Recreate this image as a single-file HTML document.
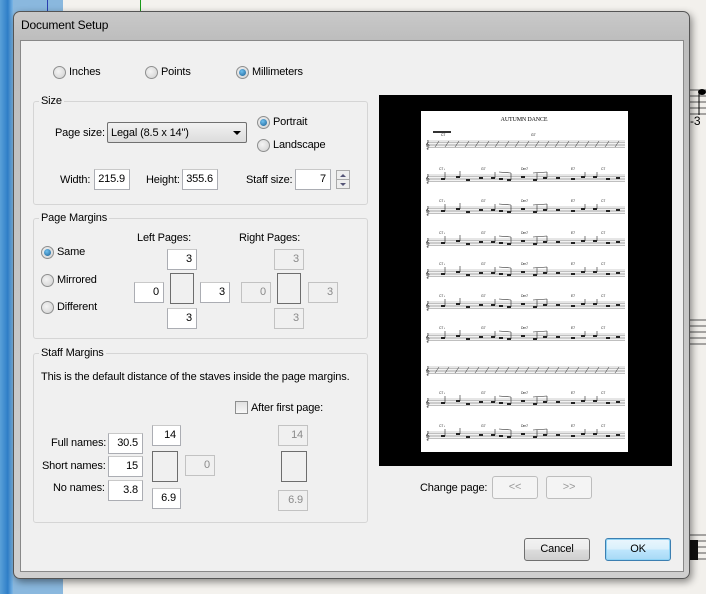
<!DOCTYPE html>
<html><head><meta charset="utf-8"><style>
*{margin:0;padding:0;box-sizing:border-box}
body{width:706px;height:594px;overflow:hidden;position:relative;background:#f4f2ee;font-family:"Liberation Sans",sans-serif;font-size:11px;letter-spacing:-0.15px;color:#000}
.abs{position:absolute}
.t{position:absolute;white-space:nowrap;line-height:14px}
.frame{left:13px;top:11px;width:677px;height:568px;border-radius:7px;background:linear-gradient(180deg,#c9c9c9 0%,#bdbdbd 5%,#cfcfcf 100%);border:1px solid #555;box-shadow:2px 3px 8px rgba(0,0,0,.45)}
.client{left:20px;top:40px;width:664px;height:532px;background:#f0f0f0;border:1px solid #888}
.grp{position:absolute;border:1px solid #d5d5d5;border-radius:3px}
.grp span{position:absolute;top:-8px;left:5px;background:#f0f0f0;padding:0 2px;line-height:14px}
.rad{position:absolute;width:13px;height:13px;border-radius:50%;border:1px solid #8e8f8f;background:radial-gradient(circle at 40% 40%,#f4f4f4,#cfcfcf)}
.rad.on::after{content:"";position:absolute;left:2px;top:2px;width:7px;height:7px;border-radius:50%;background:radial-gradient(circle at 40% 35%,#6fc1f0,#1b5f93)}
.tb{position:absolute;height:21px;background:#fff;border:1px solid #abadb3;border-top-color:#c9c9c9;text-align:right;padding-right:4px;line-height:19px}
.tb.d{background:#f0f0f0;color:#8a8a8a;border-color:#c2c2c2}
.box{position:absolute;border:1px solid #6d6d6d}
.btn{position:absolute;height:23px;border:1px solid #707070;border-radius:3px;background:linear-gradient(#f2f2f2 0%,#ebebeb 50%,#dddddd 51%,#cfcfcf 100%);text-align:center;line-height:21px}
</style></head><body>
<div class="abs" style="left:0;top:0;width:13px;height:594px;background:linear-gradient(90deg,#5aa0d8,#2f7fc8 60%,#7cb6e6)"></div>
<div class="abs" style="left:13px;top:0;width:50px;height:594px;background:#8ab8de"></div>
<div class="abs" style="left:47px;top:0;width:1px;height:12px;background:#2a3fb0"></div>
<div class="abs" style="left:140px;top:0;width:1px;height:12px;background:#1a9a1a"></div>
<div class="abs" style="left:690px;top:0;width:16px;height:594px;background:#f2f0ec"></div>
<svg class="abs" style="left:690px;top:0" width="16" height="594">
<g stroke="#555" stroke-width="1"><line x1="0" y1="90" x2="16" y2="90"/><line x1="0" y1="96" x2="16" y2="96"/><line x1="0" y1="102" x2="16" y2="102"/><line x1="0" y1="108" x2="16" y2="108"/><line x1="0" y1="114" x2="16" y2="114"/>
<line x1="0" y1="320" x2="16" y2="320"/><line x1="0" y1="326" x2="16" y2="326"/><line x1="0" y1="332" x2="16" y2="332"/><line x1="0" y1="338" x2="16" y2="338"/><line x1="0" y1="344" x2="16" y2="344"/>
<line x1="0" y1="535" x2="16" y2="535"/><line x1="0" y1="541" x2="16" y2="541"/><line x1="0" y1="547" x2="16" y2="547"/><line x1="0" y1="553" x2="16" y2="553"/><line x1="0" y1="559" x2="16" y2="559"/></g>
<ellipse cx="12" cy="92" rx="4" ry="3" fill="#000"/><line x1="9" y1="92" x2="9" y2="115" stroke="#000"/><text x="0" y="125" font-size="12" font-family="Liberation Sans">-3</text>
<rect x="0" y="540" width="8" height="20" fill="#111"/>
</svg>
<div class="abs frame"></div>
<div class="t" style="left:21px;top:18px;font-size:12px">Document Setup</div>
<div class="abs client"></div>

<div class="rad" style="left:53px;top:66px"></div><div class="t" style="left:69px;top:65px">Inches</div>
<div class="rad" style="left:145px;top:66px"></div><div class="t" style="left:161px;top:65px">Points</div>
<div class="rad on" style="left:236px;top:66px"></div><div class="t" style="left:252px;top:65px">Millimeters</div>

<div class="grp" style="left:33px;top:101px;width:335px;height:104px"><span>Size</span></div>
<div class="t" style="left:55px;top:126px">Page size:</div>
<div class="abs" style="left:107px;top:122px;width:140px;height:21px;border:1px solid #707070;border-radius:2px;background:linear-gradient(#f2f2f2,#dcdcdc)"></div>
<div class="t" style="left:111px;top:126px">Legal (8.5 x 14")</div>
<div class="abs" style="left:233px;top:131px;width:0;height:0;border-left:4px solid transparent;border-right:4px solid transparent;border-top:4px solid #000"></div>
<div class="rad on" style="left:257px;top:116px"></div><div class="t" style="left:273px;top:115px">Portrait</div>
<div class="rad" style="left:257px;top:139px"></div><div class="t" style="left:273px;top:138px">Landscape</div>
<div class="t" style="left:60px;top:173px">Width:</div>
<div class="tb" style="left:94px;top:169px;width:36px">215.9</div>
<div class="t" style="left:146px;top:173px">Height:</div>
<div class="tb" style="left:182px;top:169px;width:36px">355.6</div>
<div class="t" style="left:246px;top:173px">Staff size:</div>
<div class="tb" style="left:295px;top:169px;width:36px">7</div>
<div class="abs" style="left:336px;top:170px;width:14px;height:19px;border:1px solid #aaa;background:#eee"></div>
<div class="abs" style="left:337px;top:179px;width:12px;height:1px;background:#aaa"></div>
<div class="abs" style="left:340px;top:174px;border-left:3px solid transparent;border-right:3px solid transparent;border-bottom:3px solid #557"></div>
<div class="abs" style="left:340px;top:183px;border-left:3px solid transparent;border-right:3px solid transparent;border-top:3px solid #557"></div>

<div class="grp" style="left:33px;top:218px;width:335px;height:121px"><span>Page Margins</span></div>
<div class="rad on" style="left:41px;top:246px"></div><div class="t" style="left:57px;top:245px">Same</div>
<div class="rad" style="left:41px;top:274px"></div><div class="t" style="left:57px;top:273px">Mirrored</div>
<div class="rad" style="left:41px;top:301px"></div><div class="t" style="left:57px;top:300px">Different</div>
<div class="t" style="left:137px;top:231px">Left Pages:</div>
<div class="t" style="left:239px;top:231px">Right Pages:</div>
<div class="tb" style="left:167px;top:249px;width:30px">3</div>
<div class="tb" style="left:134px;top:282px;width:30px">0</div>
<div class="box" style="left:170px;top:273px;width:24px;height:31px"></div>
<div class="tb" style="left:200px;top:282px;width:30px">3</div>
<div class="tb" style="left:167px;top:308px;width:30px">3</div>
<div class="tb d" style="left:274px;top:249px;width:30px">3</div>
<div class="tb d" style="left:241px;top:282px;width:30px">0</div>
<div class="box" style="left:277px;top:273px;width:24px;height:31px"></div>
<div class="tb d" style="left:308px;top:282px;width:30px">3</div>
<div class="tb d" style="left:274px;top:308px;width:30px">3</div>

<div class="grp" style="left:33px;top:353px;width:335px;height:170px"><span>Staff Margins</span></div>
<div class="t" style="left:41px;top:370px">This is the default distance of the staves inside the page margins.</div>
<div class="abs" style="left:235px;top:401px;width:13px;height:13px;border:1px solid #8e8f8f;background:linear-gradient(#e0e0e0,#f8f8f8)"></div>
<div class="t" style="left:251px;top:401px">After first page:</div>
<div class="t" style="left:51px;top:436px">Full names:</div>
<div class="t" style="left:42px;top:459px">Short names:</div>
<div class="t" style="left:53px;top:481px">No names:</div>
<div class="tb" style="left:108px;top:433px;width:35px">30.5</div>
<div class="tb" style="left:108px;top:456px;width:35px">15</div>
<div class="tb" style="left:108px;top:480px;width:35px">3.8</div>
<div class="tb" style="left:152px;top:425px;width:29px">14</div>
<div class="box" style="left:152px;top:451px;width:26px;height:31px"></div>
<div class="tb d" style="left:185px;top:455px;width:30px">0</div>
<div class="tb" style="left:152px;top:488px;width:29px">6.9</div>
<div class="tb d" style="left:278px;top:425px;width:30px">14</div>
<div class="box" style="left:281px;top:451px;width:26px;height:31px"></div>
<div class="tb d" style="left:278px;top:490px;width:30px">6.9</div>

<div class="abs" style="left:379px;top:95px;width:293px;height:371px;background:#000"></div>
<svg class="abs" style="left:421px;top:111px" width="207" height="341" viewBox="0 0 207 341">
<rect width="207" height="341" fill="#fff"/>
<text x="103" y="10" font-size="6" text-anchor="middle" font-family="Liberation Serif">AUTUMN DANCE</text>
<rect x="12" y="20" width="18" height="2" fill="#333"/>
<defs>
<g id="st"><g stroke="#999" stroke-width=".6"><line x1="6" y1="0" x2="204" y2="0"/><line x1="6" y1="1.6" x2="204" y2="1.6"/><line x1="6" y1="3.2" x2="204" y2="3.2"/><line x1="6" y1="4.8" x2="204" y2="4.8"/><line x1="6" y1="6.4" x2="204" y2="6.4"/></g>
<text x="4" y="6" font-size="8" fill="#222">&#119070;</text></g>
<g id="row" fill="#222" font-size="3.5" font-family="Liberation Sans"><text x="18" y="-5">C7 ♩</text><text x="60" y="-5">G7</text><text x="100" y="-5">Dm7</text><text x="150" y="-5">E7</text><text x="180" y="-5">C7</text>
<rect x="20" y="3" width="4" height="2"/><rect x="35" y="1" width="4" height="2"/><rect x="45" y="4" width="4" height="2"/><rect x="58" y="2" width="4" height="2"/><rect x="70" y="2" width="4" height="2"/><rect x="78" y="3" width="4" height="2"/><rect x="86" y="4" width="4" height="2"/><rect x="100" y="1" width="4" height="2"/><rect x="112" y="4" width="4" height="2"/><rect x="122" y="2" width="4" height="2"/><rect x="135" y="2" width="4" height="2"/><rect x="150" y="3" width="4" height="2"/><rect x="160" y="1" width="4" height="2"/><rect x="172" y="1" width="4" height="2"/><rect x="185" y="3" width="4" height="2"/><rect x="195" y="2" width="4" height="2"/>
<g stroke="#222" stroke-width=".6"><line x1="24" y1="-3" x2="24" y2="4"/><line x1="39" y1="-4" x2="39" y2="2"/><line x1="74" y1="-3" x2="74" y2="3"/><line x1="90" y1="-2" x2="90" y2="5"/><line x1="116" y1="-2" x2="116" y2="5"/><line x1="126" y1="-3" x2="126" y2="3"/><line x1="164" y1="-3" x2="164" y2="2"/><line x1="176" y1="-3" x2="176" y2="2"/><line x1="78" y1="-3" x2="90" y2="-2"/><line x1="112" y1="-2" x2="126" y2="-3"/></g></g>
<g id="sl" stroke="#555" stroke-width=".6"><path d="M14 6 l4 -6 M24 6 l4 -6 M34 6 l4 -6 M44 6 l4 -6 M54 6 l4 -6 M64 6 l4 -6 M74 6 l4 -6 M84 6 l4 -6 M94 6 l4 -6 M104 6 l4 -6 M114 6 l4 -6 M124 6 l4 -6 M134 6 l4 -6 M144 6 l4 -6 M154 6 l4 -6 M164 6 l4 -6 M174 6 l4 -6 M184 6 l4 -6 M194 6 l4 -6"/></g>
</defs>
<use href="#st" y="30"/><use href="#sl" y="30"/><text x="20" y="25" font-size="3.5">C7</text><text x="110" y="25" font-size="3.5">G7</text>
<use href="#st" y="64"/><use href="#row" y="64"/>
<use href="#st" y="96"/><use href="#row" y="96"/>
<use href="#st" y="128"/><use href="#row" y="128"/>
<use href="#st" y="159"/><use href="#row" y="159"/>
<use href="#st" y="191"/><use href="#row" y="191"/>
<use href="#st" y="223"/><use href="#row" y="223"/>
<use href="#st" y="256"/><use href="#sl" y="256"/>
<use href="#st" y="288"/><use href="#row" y="288"/>
<use href="#st" y="321"/><use href="#row" y="321"/>
</svg>
<div class="t" style="left:420px;top:481px">Change page:</div>
<div class="btn" style="left:492px;top:476px;width:46px;border-color:#bdbdbd;background:#f4f4f4;color:#999">&lt;&lt;</div>
<div class="btn" style="left:546px;top:476px;width:46px;border-color:#bdbdbd;background:#f4f4f4;color:#999">&gt;&gt;</div>
<div class="btn" style="left:524px;top:538px;width:66px">Cancel</div>
<div class="btn" style="left:605px;top:538px;width:66px;border-color:#3c7fb1;background:linear-gradient(#eaf6fd 0%,#d9f0fc 50%,#bee6fd 51%,#a7d9f5 100%);box-shadow:inset 0 0 0 1px #8fd3f5">OK</div>
</body></html>
